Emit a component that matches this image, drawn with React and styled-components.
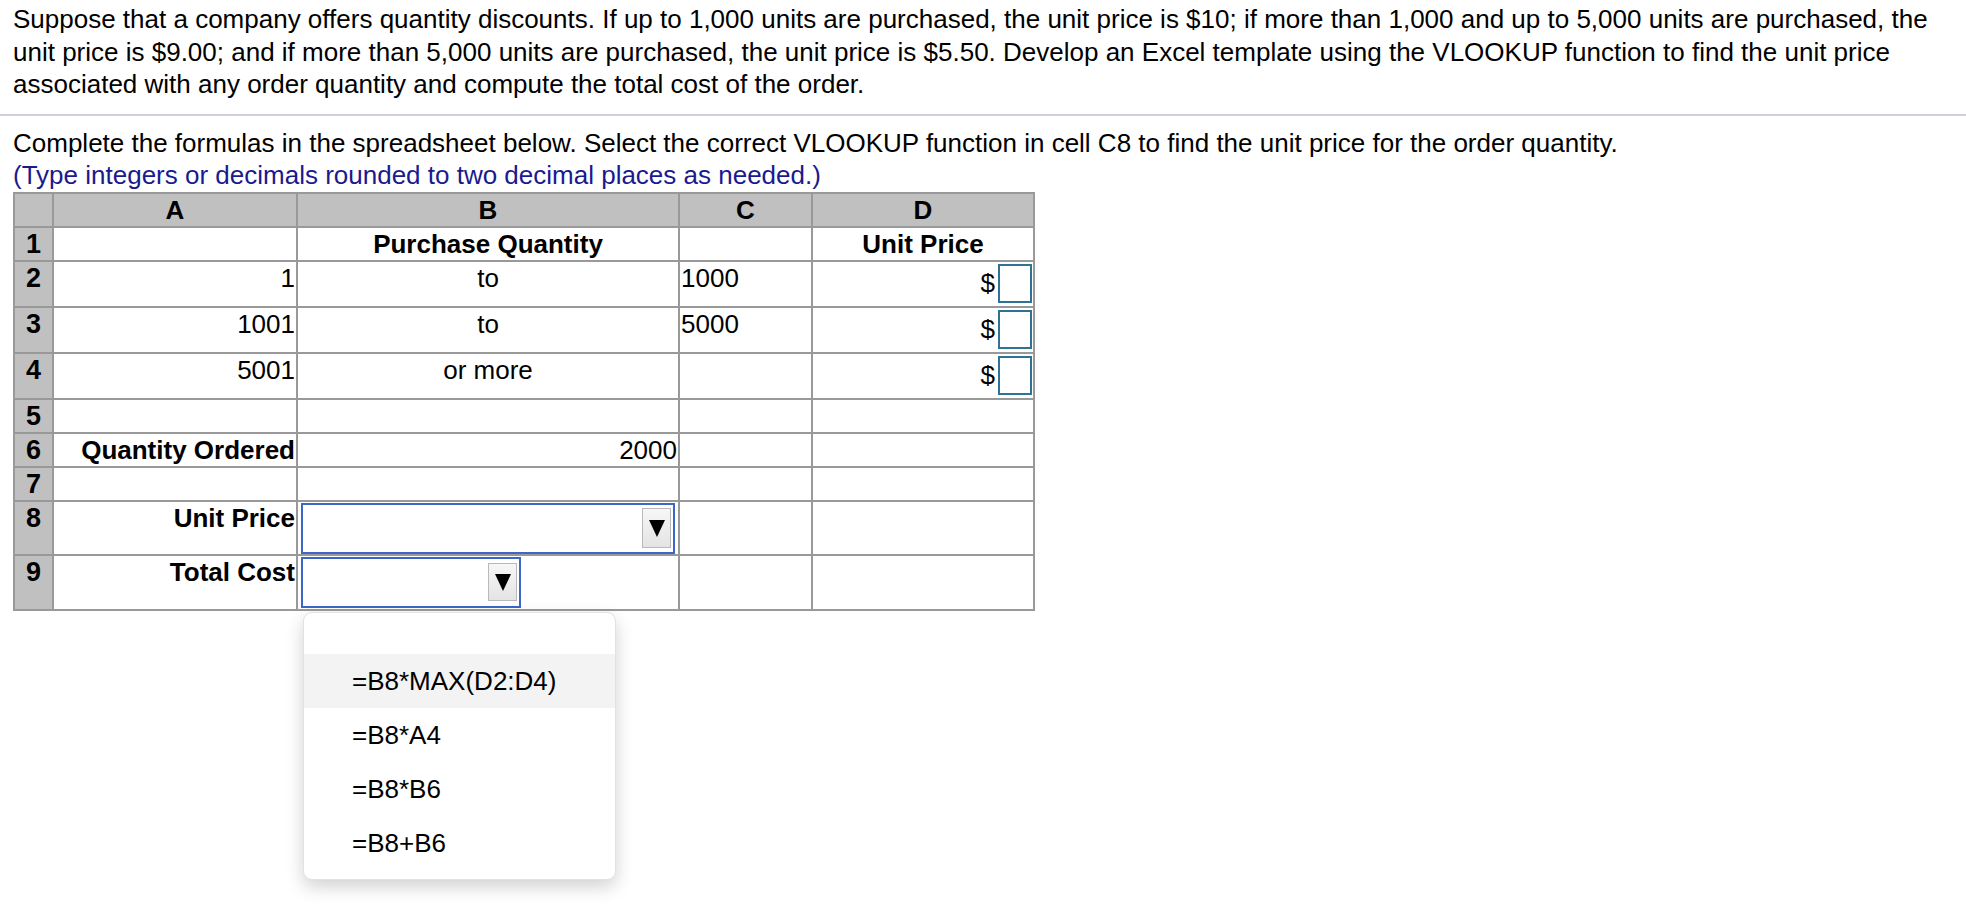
import React from "react";
import styled, { createGlobalStyle } from "styled-components";

const GlobalStyle = createGlobalStyle`
  html, body { margin: 0; padding: 0; background: #ffffff; }
  body {
    font-family: "Liberation Sans", Arial, Helvetica, sans-serif;
    color: #000;
  }
`;

const Page = styled.div`
  box-sizing: border-box;
  min-height: 920px;
  padding-top: 3px;
`;

const Prose = styled.p`
  margin: 0;
  padding: 0 20px 0 13px;
  font-size: 26px;
  line-height: 32.5px;
  color: ${(p) => (p.$note ? "#1a1a8f" : "#000")};
`;

const Rule = styled.hr`
  border: 0;
  height: 2px;
  background: #cdd1da;
  margin: 13px 0 11px;
`;

const Sheet = styled.table`
  margin-left: 13px;
  border-collapse: collapse;
  table-layout: fixed;
  width: 1020px;
  font-size: 26px;
  line-height: 32px;
`;

const Row = styled.tr`
  height: ${(p) => p.$h}px;
`;

const ColHead = styled.th`
  background: #c0c0c0;
  border: 2px solid #999;
  font-weight: bold;
  text-align: center;
  vertical-align: middle;
  padding: 0;
  line-height: 30px;
`;

const RowHead = styled.th`
  background: #c0c0c0;
  border: 2px solid #999;
  font-family: "Liberation Sans Narrow", "Liberation Sans", Arial, sans-serif;
  font-weight: bold;
  font-size: 27px;
  text-align: center;
  vertical-align: top;
  padding: 0;
`;

const Cell = styled.td`
  position: relative;
  border: 2px solid #999;
  padding: ${(p) => (p.$flush ? "0" : "0 1px")};
  vertical-align: top;
  text-align: ${(p) => p.$align || "left"};
  font-weight: ${(p) => (p.$bold ? "bold" : "normal")};
  white-space: nowrap;
`;

const PriceSlot = styled.div`
  display: flex;
  justify-content: flex-end;
  align-items: center;
  gap: 3px;
  padding: 2px 1px 0 0;
`;

const Dollar = styled.span`
  font-size: 26px;
  line-height: 39px;
`;

const AnswerBox = styled.span`
  display: block;
  box-sizing: border-box;
  width: 34px;
  height: 39px;
  border: 2px solid #2e7396;
  background: #fff;
`;

const Picker = styled.div`
  box-sizing: border-box;
  width: ${(p) => p.$w}px;
  height: 51px;
  margin: 1px 0 0 3px;
  border: 2px solid #3d67c7;
  background: #fff;
  display: flex;
  align-items: center;
  justify-content: flex-end;
  padding-right: 2px;
`;

const PickerButton = styled.span`
  box-sizing: border-box;
  width: 29px;
  height: ${(p) => p.$h}px;
  border: 1px solid #b9b9b9;
  background: linear-gradient(#f7f7f7, #e4e4e4);
  display: flex;
  align-items: center;
  justify-content: center;
`;

const Caret = styled.span`
  width: 0;
  height: 0;
  border-left: 8px solid transparent;
  border-right: 8px solid transparent;
  border-top: 17px solid #000;
`;

const Menu = styled.div`
  position: absolute;
  top: calc(100% + 3px);
  left: 5px;
  z-index: 5;
  box-sizing: border-box;
  width: 313px;
  padding: 8px 0 9px;
  background: #fff;
  border: 1px solid #e2e2e2;
  border-radius: 9px;
  box-shadow: 0 7px 18px rgba(0, 0, 0, 0.18);
  font-size: 26px;
  font-weight: normal;
  text-align: left;
`;

const MenuItem = styled.div`
  height: ${(p) => (p.$blank ? 33 : 54)}px;
  line-height: 54px;
  padding-left: 48px;
  background: ${(p) => (p.$active ? "#f3f3f3" : "#fff")};
`;

const priceRows = [
  { n: 2, a: "1", b: "to", c: "1000" },
  { n: 3, a: "1001", b: "to", c: "5000" },
  { n: 4, a: "5001", b: "or more", c: "" },
];

const options = ["=B8*MAX(D2:D4)", "=B8*A4", "=B8*B6", "=B8+B6"];

export default function App() {
  return (
    <Page>
      <GlobalStyle />
      <Prose>
        Suppose that a company offers quantity discounts. If up to 1,000 units are purchased, the unit price is $10; if
        more than 1,000 and up to 5,000 units are purchased, the unit price is $9.00; and if more than 5,000 units are
        purchased, the unit price is $5.50. Develop an Excel template using the VLOOKUP function to find the unit price
        associated with any order quantity and compute the total cost of the order.
      </Prose>
      <Rule />
      <Prose>
        Complete the formulas in the spreadsheet below. Select the correct VLOOKUP function in cell C8 to find the unit
        price for the order quantity.
      </Prose>
      <Prose $note>(Type integers or decimals rounded to two decimal places as needed.)</Prose>
      <Sheet>
        <colgroup>
          <col style={{ width: 39 }} />
          <col style={{ width: 244 }} />
          <col style={{ width: 382 }} />
          <col style={{ width: 133 }} />
          <col style={{ width: 222 }} />
        </colgroup>
        <tbody>
          <Row $h={34}>
            <ColHead />
            <ColHead>A</ColHead>
            <ColHead>B</ColHead>
            <ColHead>C</ColHead>
            <ColHead>D</ColHead>
          </Row>
          <Row $h={34}>
            <RowHead>1</RowHead>
            <Cell />
            <Cell $align="center" $bold>
              Purchase Quantity
            </Cell>
            <Cell />
            <Cell $align="center" $bold>
              Unit Price
            </Cell>
          </Row>
          {priceRows.map((r) => (
            <Row key={r.n} $h={46}>
              <RowHead>{r.n}</RowHead>
              <Cell $align="right">{r.a}</Cell>
              <Cell $align="center">{r.b}</Cell>
              <Cell>{r.c}</Cell>
              <Cell $flush>
                <PriceSlot>
                  <Dollar>$</Dollar>
                  <AnswerBox />
                </PriceSlot>
              </Cell>
            </Row>
          ))}
          <Row $h={33}>
            <RowHead>5</RowHead>
            <Cell />
            <Cell />
            <Cell />
            <Cell />
          </Row>
          <Row $h={34}>
            <RowHead>6</RowHead>
            <Cell $align="right" $bold>
              Quantity Ordered
            </Cell>
            <Cell $align="right">2000</Cell>
            <Cell />
            <Cell />
          </Row>
          <Row $h={34}>
            <RowHead>7</RowHead>
            <Cell />
            <Cell />
            <Cell />
            <Cell />
          </Row>
          <Row $h={54}>
            <RowHead>8</RowHead>
            <Cell $align="right" $bold>
              Unit Price
            </Cell>
            <Cell $flush>
              <Picker $w={374}>
                <PickerButton $h={40}>
                  <Caret />
                </PickerButton>
              </Picker>
            </Cell>
            <Cell />
            <Cell />
          </Row>
          <Row $h={55}>
            <RowHead>9</RowHead>
            <Cell $align="right" $bold>
              Total Cost
            </Cell>
            <Cell $flush>
              <Picker $w={220}>
                <PickerButton $h={38}>
                  <Caret />
                </PickerButton>
              </Picker>
              <Menu>
                <MenuItem $blank />
                {options.map((o, i) => (
                  <MenuItem key={o} $active={i === 0}>
                    {o}
                  </MenuItem>
                ))}
              </Menu>
            </Cell>
            <Cell />
            <Cell />
          </Row>
        </tbody>
      </Sheet>
    </Page>
  );
}
